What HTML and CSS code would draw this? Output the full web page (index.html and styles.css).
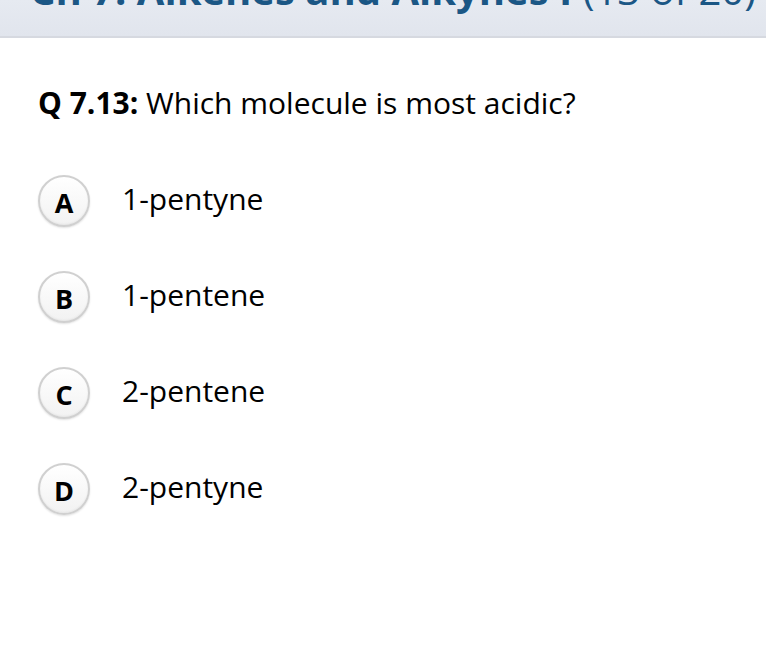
FILE: index.html
```html
<!DOCTYPE html>
<html>
<head>
<meta charset="utf-8">
<link rel="stylesheet" href="styles.css">
</head>
<body>
<header class="topbar">
  <h1 class="title"><span class="title-main">Ch 7: Alkenes and Alkynes I</span> <span class="title-count">(13 of 20)</span></h1>
</header>
<main class="content">
  <p class="question"><strong>Q 7.13:</strong> Which molecule is most acidic?</p>
  <ul class="options">
    <li class="option"><span class="badge">A</span><span class="option-text">1-pentyne</span></li>
    <li class="option"><span class="badge">B</span><span class="option-text">1-pentene</span></li>
    <li class="option"><span class="badge">C</span><span class="option-text">2-pentene</span></li>
    <li class="option"><span class="badge">D</span><span class="option-text">2-pentyne</span></li>
  </ul>
</main>
</body>
</html>
```
FILE: styles.css
```css
* { box-sizing: border-box; }
html, body { margin: 0; padding: 0; background: #ffffff; }
body { font-family: "Open Sans", "Noto Sans", sans-serif; color: #000; width: 766px; height: 650px; overflow: hidden; }

.topbar {
  height: 38px;
  background: linear-gradient(#e6eaf1, #e1e5ed);
  border-bottom: 2px solid #d6d9e0;
  overflow: hidden;
  position: relative;
}
.title {
  margin: 0;
  padding-left: 30px;
  font-size: 40px;
  line-height: 40px;
  color: #1b5785;
  white-space: nowrap;
  margin-top: -30px;
  font-weight: 700;
}
.title-count { font-weight: 400; }

.content { padding: 0 0 0 38px; }
.question {
  margin: 45px 0 0 0;
  font-size: 30px;
  line-height: 40px;
}
.question strong { font-weight: 700; }

.options { list-style: none; margin: 52px 0 0 0; padding: 0; display: flex; flex-direction: column; gap: 44px; }
.option { display: flex; align-items: center; height: 52px; }
.badge {
  width: 52px; height: 52px; border-radius: 50%;
  border: 2px solid #d0d0d0;
  background: linear-gradient(#ffffff, #f2f2f2);
  box-shadow: 0 1px 2px rgba(0,0,0,0.12), inset 0 -1px 2px rgba(0,0,0,0.05);
  display: flex; align-items: center; justify-content: center;
  font-weight: 700; font-size: 27px;
  padding-top: 3px;
  flex: none;
}
.option-text { margin-left: 32px; font-size: 30px; line-height: 40px; margin-top: -4px; }
```
